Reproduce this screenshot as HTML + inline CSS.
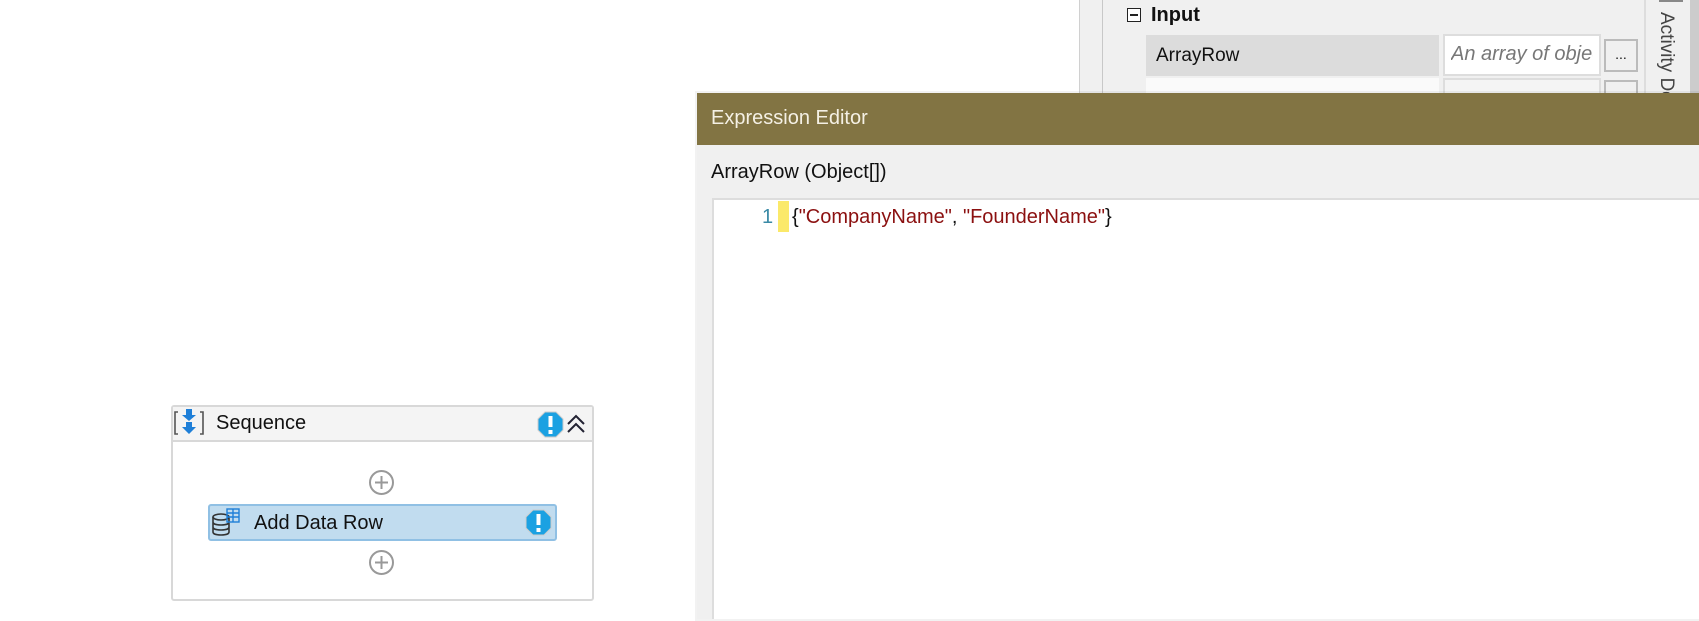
<!DOCTYPE html>
<html><head><meta charset="utf-8"><style>
*{margin:0;padding:0;box-sizing:border-box}
body{width:1699px;height:619px;overflow:hidden;background:#fff;position:relative;font-family:"Liberation Sans",sans-serif;color:#111}
.a{position:absolute}
</style></head><body>
<!-- properties panel -->
<div class="a" style="left:1079px;top:0;width:620px;height:93px;background:#f0f0f0;border-left:1px solid #d0d0d0"></div>
<div class="a" style="left:1102px;top:0;width:1px;height:93px;background:#c8c8c8"></div>
<div class="a" style="left:1127px;top:8px;width:14px;height:14px;border:1px solid #222;background:#fff"></div>
<div class="a" style="left:1130px;top:14px;width:8px;height:1.5px;background:#222"></div>
<div class="a" style="left:1151px;top:4px;font-size:20px;font-weight:bold">Input</div>
<div class="a" style="left:1146px;top:35px;width:293px;height:41px;background:#dcdcdc"></div>
<div class="a" style="left:1156px;top:45px;font-size:19px">ArrayRow</div>
<div class="a" style="left:1146px;top:78px;width:293px;height:20px;background:#fafafa"></div>
<div class="a" style="left:1443px;top:34px;width:158px;height:42px;background:#fff;border:2px solid #ddd"></div>
<div class="a" style="left:1451px;top:43px;width:142px;overflow:hidden;white-space:nowrap;font-size:20px;font-style:italic;color:#777">An array of objects</div>
<div class="a" style="left:1443px;top:78px;width:158px;height:20px;background:#f4f4f4;border:2px solid #ddd"></div>
<div class="a" style="left:1604px;top:39px;width:34px;height:33px;background:#f0f0f0;border:2px solid #bbb;font-size:14px;text-align:center;line-height:26px">...</div>
<div class="a" style="left:1604px;top:80px;width:34px;height:29px;border:2px solid #bbb"></div>
<div class="a" style="left:1644px;top:0;width:2px;height:93px;background:#ddd"></div>
<div class="a" style="left:1659px;top:-4px;width:24px;height:6px;border:2px solid #888"></div>
<div class="a" style="left:1655px;top:12px;font-size:19px;color:#444;writing-mode:vertical-rl">Activity Designer</div>
<div class="a" style="left:1690px;top:0;width:9px;height:93px;background:#ccc"></div>
<!-- expression editor -->
<div class="a" style="left:695px;top:91px;width:1006px;height:530px;background:rgba(0,0,0,0.05)"></div>
<div class="a" style="left:697px;top:93px;width:1002px;height:526px;background:#f0f0f0"></div>
<div class="a" style="left:697px;top:93px;width:1002px;height:52px;background:#827443"></div>
<div class="a" style="left:711px;top:107px;font-size:20px;color:#f4f0e4">Expression Editor</div>
<div class="a" style="left:711px;top:161px;font-size:20px;color:#111">ArrayRow (Object[])</div>
<div class="a" style="left:712px;top:198px;width:987px;height:421px;background:#fff;border-top:2px solid #ddd;border-left:2px solid #ddd"></div>
<div class="a" style="left:762px;top:206px;font-size:20px;color:#3a8aa6">1</div>
<div class="a" style="left:778px;top:201px;width:11px;height:31px;background:#fbe96a"></div>
<div class="a" style="left:792px;top:206px;font-size:20px;color:#8b1010;white-space:nowrap"><span style="color:#111">{</span>"CompanyName"<span style="color:#111">, </span>"FounderName"<span style="color:#111">}</span></div>
<!-- sequence -->
<div class="a" style="left:171px;top:405px;width:423px;height:196px;border:2px solid #d8d8d8;border-radius:3px;background:#fff"></div>
<div class="a" style="left:173px;top:407px;width:419px;height:35px;background:#f4f4f4;border-bottom:2px solid #d8d8d8"></div>
<svg class="a" style="left:173px;top:409px" width="32" height="28" viewBox="0 0 32 28"><path d="M5 3H2v22h3M27 3h3v22h-3" fill="none" stroke="#555" stroke-width="1.6"/><path d="M13 0h6v6h4l-7 6-7-6h4z M13 13h6v5h4l-7 7-7-7h4z" fill="#1e7fd8"/></svg>
<div class="a" style="left:216px;top:412px;font-size:20px">Sequence</div>
<svg class="a" style="left:537px;top:411px" width="27" height="27" viewBox="0 0 27 27"><polygon points="8,1 19,1 26,8 26,19 19,26 8,26 1,19 1,8" fill="#1ba1e2" stroke="#ccc"/><rect x="11.5" y="5" width="4" height="11" fill="#fff"/><rect x="11.5" y="19" width="4" height="4" fill="#fff"/></svg>
<svg class="a" style="left:566px;top:414px" width="20" height="20" viewBox="0 0 20 20"><path d="M2 10l8-8 8 8M2 18l8-8 8 8" fill="none" stroke="#223" stroke-width="2"/></svg>
<svg class="a" style="left:368px;top:469px" width="27" height="27"><circle cx="13.5" cy="13.5" r="11.5" fill="none" stroke="#999" stroke-width="2"/><path d="M13.5 7v13M7 13.5h13" stroke="#999" stroke-width="2"/></svg>
<svg class="a" style="left:368px;top:549px" width="27" height="27"><circle cx="13.5" cy="13.5" r="11.5" fill="none" stroke="#999" stroke-width="2"/><path d="M13.5 7v13M7 13.5h13" stroke="#999" stroke-width="2"/></svg>
<div class="a" style="left:208px;top:504px;width:349px;height:37px;background:#c1dcef;border:2px solid #90c0e4;border-radius:3px"></div>
<svg class="a" style="left:211px;top:508px" width="32" height="30" viewBox="0 0 32 30"><g fill="none" stroke="#333" stroke-width="1.6"><ellipse cx="10" cy="9" rx="8" ry="3"/><path d="M2 9v15c0 2 3.5 3 8 3s8-1 8-3V9M2 14c0 2 3.5 3 8 3s8-1 8-3M2 19c0 2 3.5 3 8 3s8-1 8-3"/></g><g fill="none" stroke="#1e7fd8" stroke-width="1.4"><rect x="16" y="1" width="12" height="13"/><path d="M16 5h12M16 9h12M22 1v13"/></g></svg>
<div class="a" style="left:254px;top:512px;font-size:20px">Add Data Row</div>
<svg class="a" style="left:525px;top:509px" width="27" height="27" viewBox="0 0 27 27"><polygon points="8,1 19,1 26,8 26,19 19,26 8,26 1,19 1,8" fill="#1ba1e2" stroke="#ccc"/><rect x="11.5" y="5" width="4" height="11" fill="#fff"/><rect x="11.5" y="19" width="4" height="4" fill="#fff"/></svg>
</body></html>
